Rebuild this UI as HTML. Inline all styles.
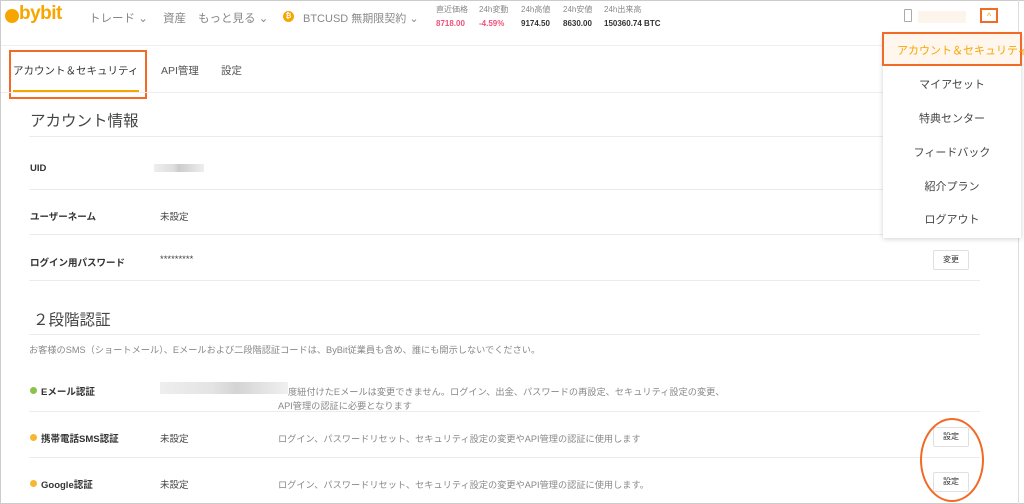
<!DOCTYPE html>
<html><head><meta charset="utf-8"><style>
*{margin:0;padding:0;box-sizing:border-box}
body{width:1024px;height:504px;overflow:hidden;background:#fff;font-family:"Liberation Sans","Noto Sans CJK JP",sans-serif;position:relative;color:#333}
.a{position:absolute;white-space:nowrap}
.l{position:absolute;height:1px;background:#ececec}
.lab{font-size:9.5px;font-weight:bold;color:#333}
.val{font-size:9.5px;color:#444}
.desc{font-size:9.2px;color:#888}
.btn{position:absolute;width:36px;height:20px;border:1px solid #e0e0e0;border-radius:2px;font-size:8px;text-align:center;line-height:18px;color:#333;background:#fff}
.dd{font-size:11px;color:#444;text-align:center;width:138px}
</style></head><body>
<div style="position:absolute;left:0;top:0;width:1024px;height:504px;border:1px solid #ccc;border-right:none"></div>
<div style="position:absolute;left:1018px;top:0;width:1px;height:504px;background:#ddd"></div>
<!-- header -->
<div class="a" style="left:5px;top:9px;width:14px;height:14px;border-radius:50%;background:#f7a600"></div>
<div class="a" style="left:19px;top:3px;font-size:19px;font-weight:bold;color:#f7a600;letter-spacing:-0.5px">bybit</div>
<div class="a" style="left:89px;top:10px;font-size:11.5px;color:#888">トレード ⌄</div>
<div class="a" style="left:163px;top:10px;font-size:11.5px;color:#888">資産</div>
<div class="a" style="left:198px;top:10px;font-size:11.5px;color:#888">もっと見る ⌄</div>
<div class="a" style="left:283px;top:11px;width:11px;height:11px;border-radius:50%;background:#f7a600;color:#fff;font-size:7px;text-align:center;line-height:11px;font-weight:bold">₿</div>
<div class="a" style="left:303px;top:10px;font-size:11px;color:#888">BTCUSD 無期限契約 ⌄</div>
<div class="a" style="left:436px;top:4px;font-size:8px;color:#888">直近価格</div>
<div class="a" style="left:436px;top:19px;font-size:8px;color:#f0507a;font-weight:bold">8718.00</div>
<div class="a" style="left:479px;top:4px;font-size:8px;color:#888">24h変動</div>
<div class="a" style="left:479px;top:19px;font-size:8px;color:#f0507a;font-weight:bold">-4.59%</div>
<div class="a" style="left:521px;top:4px;font-size:8px;color:#888">24h高値</div>
<div class="a" style="left:521px;top:19px;font-size:8px;color:#333;font-weight:bold">9174.50</div>
<div class="a" style="left:563px;top:4px;font-size:8px;color:#888">24h安値</div>
<div class="a" style="left:563px;top:19px;font-size:8px;color:#333;font-weight:bold">8630.00</div>
<div class="a" style="left:604px;top:4px;font-size:8px;color:#888">24h出来高</div>
<div class="a" style="left:604px;top:19px;font-size:8px;color:#333;font-weight:bold">150360.74 BTC</div>
<div class="a" style="left:904px;top:9px;width:8px;height:13px;border:1px solid #aaa;border-radius:1px"></div>
<div class="a" style="left:918px;top:11px;width:48px;height:12px;background:#fdf4ec"></div>
<div class="a" style="left:980px;top:8px;width:18px;height:15px;border:2px solid #f36a27;font-size:9px;color:#f7a600;text-align:center;line-height:12px">^</div>
<div class="l" style="left:1px;top:45px;width:1017px;background:#eee"></div>
<!-- tabs -->
<div class="a" style="left:13px;top:63px;font-size:10.5px;color:#333">アカウント＆セキュリティ</div>
<div class="a" style="left:13px;top:90px;width:126px;height:2px;background:#f7a600"></div>
<div class="a" style="left:9px;top:50px;width:138px;height:49px;border:2px solid #f36a27"></div>
<div class="a" style="left:161px;top:63px;font-size:10.5px;color:#555">API管理</div>
<div class="a" style="left:221px;top:63px;font-size:10.5px;color:#555">設定</div>
<div class="l" style="left:1px;top:92px;width:1017px;background:#eee"></div>
<!-- account -->
<div class="a" style="left:30px;top:109px;font-size:15.5px;color:#444">アカウント情報</div>
<div class="l" style="left:29px;top:136px;width:951px"></div>
<div class="a lab" style="left:30px;top:163px">UID</div>
<div class="a" style="left:154px;top:164px;width:50px;height:8px;background:linear-gradient(90deg,#eee,#ddd 40%,#ccc 50%,#eee)"></div>
<div class="l" style="left:29px;top:189px;width:951px"></div>
<div class="a lab" style="left:30px;top:209px">ユーザーネーム</div>
<div class="a val" style="left:160px;top:209px">未設定</div>
<div class="l" style="left:29px;top:234px;width:951px"></div>
<div class="a lab" style="left:30px;top:255px">ログイン用パスワード</div>
<div class="a val" style="left:160px;top:254px">*********</div>
<div class="btn" style="left:933px;top:250px">変更</div>
<div class="l" style="left:29px;top:280px;width:951px"></div>
<div class="a" style="left:33px;top:308px;font-size:15.5px;color:#444">２段階認証</div>
<div class="l" style="left:29px;top:334px;width:951px"></div>
<div class="a desc" style="left:29px;top:342px">お客様のSMS（ショートメール）、Eメールおよび二段階認証コードは、ByBit従業員も含め、誰にも開示しないでください。</div>
<!-- email -->
<div class="a" style="left:30px;top:387px;width:7px;height:7px;border-radius:50%;background:#8bc34a"></div>
<div class="a lab" style="left:41px;top:384px">Eメール認証</div>
<div class="a" style="left:160px;top:382px;width:128px;height:12px;background:linear-gradient(90deg,#eee,#e4e4e4 40%,#d4d4d4 60%,#f0f0f0)"></div>
<div class="a desc" style="left:288px;top:384px">度紐付けたEメールは変更できません。ログイン、出金、パスワードの再設定、セキュリティ設定の変更、</div>
<div class="a desc" style="left:278px;top:398px">API管理の認証に必要となります</div>
<div class="l" style="left:29px;top:411px;width:951px"></div>
<div class="a" style="left:30px;top:434px;width:7px;height:7px;border-radius:50%;background:#f7b731"></div>
<div class="a lab" style="left:41px;top:431px">携帯電話SMS認証</div>
<div class="a val" style="left:160px;top:431px">未設定</div>
<div class="a desc" style="left:278px;top:431px">ログイン、パスワードリセット、セキュリティ設定の変更やAPI管理の認証に使用します</div>
<div class="btn" style="left:933px;top:427px">設定</div>
<div class="l" style="left:29px;top:457px;width:951px"></div>
<div class="a" style="left:30px;top:480px;width:7px;height:7px;border-radius:50%;background:#f7b731"></div>
<div class="a lab" style="left:41px;top:477px">Google認証</div>
<div class="a val" style="left:160px;top:477px">未設定</div>
<div class="a desc" style="left:278px;top:477px">ログイン、パスワードリセット、セキュリティ設定の変更やAPI管理の認証に使用します。</div>
<div class="btn" style="left:933px;top:472px">設定</div>
<div class="a" style="left:920px;top:418px;width:64px;height:84px;border:2px solid #f36a27;border-radius:50%"></div>
<!-- dropdown -->
<div class="a" style="left:883px;top:34px;width:138px;height:204px;background:#fff;box-shadow:0 1px 5px rgba(0,0,0,.18)"></div>
<div class="a" style="left:882px;top:32px;width:140px;height:34px;background:#fff6ee;border:2px solid #f36a27;overflow:hidden"></div>
<div class="a" style="left:897px;top:42px;font-size:11px;color:#f7a600">アカウント＆セキュリティ</div>
<div class="a dd" style="left:883px;top:76px">マイアセット</div>
<div class="a dd" style="left:883px;top:110px">特典センター</div>
<div class="a dd" style="left:883px;top:144px">フィードバック</div>
<div class="a dd" style="left:883px;top:178px">紹介プラン</div>
<div class="a dd" style="left:883px;top:211px">ログアウト</div>
</body></html>
